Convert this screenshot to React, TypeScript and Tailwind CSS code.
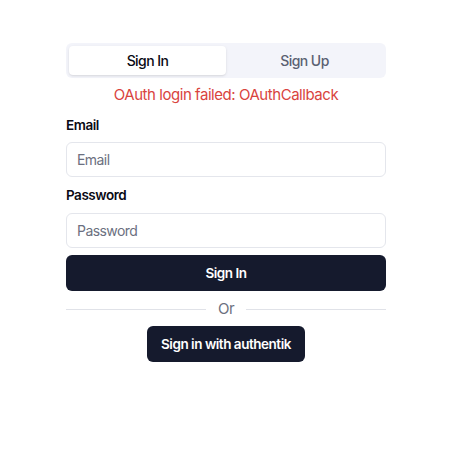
import { useState } from "react";

export default function App() {
  const [tab, setTab] = useState<"signin" | "signup">("signin");

  return (
    <div className="min-h-screen bg-white pt-[43px] pl-[66px] font-['Inter',sans-serif] text-[#0a0a14]">
      <div className="w-[320px] flex flex-col">
        <div className="flex rounded-md bg-[#f3f4fa] p-[3px] h-[35px]">
          <button
            onClick={() => setTab("signin")}
            className={`flex-1 rounded text-sm tracking-[-0.04em] font-medium ${tab === "signin" ? "bg-white text-[#0a0a14] shadow-sm" : "text-[#5a6072]"}`}
          >
            Sign In
          </button>
          <button
            onClick={() => setTab("signup")}
            className={`flex-1 rounded text-sm tracking-[-0.04em] font-medium ${tab === "signup" ? "bg-white text-[#0a0a14] shadow-sm" : "text-[#5a6072]"}`}
          >
            Sign Up
          </button>
        </div>

        <p className="mt-[7px] text-center text-[15px] tracking-[-0.03em] leading-5 text-[#d9443e]">
          OAuth login failed: OAuthCallback
        </p>

        <form className="flex flex-col" onSubmit={(e) => e.preventDefault()}>
          <label className="mt-[10px] text-[13.5px] tracking-[-0.035em] leading-5 font-semibold">Email</label>
          <input
            type="email"
            placeholder="Email"
            className="mt-[7px] h-[35px] rounded-md border border-[#e4e6ec] px-[10px] text-sm tracking-[-0.04em] placeholder:text-[#6b7080] outline-none"
          />
          <label className="mt-[8px] text-[13.5px] tracking-[-0.035em] leading-5 font-semibold">Password</label>
          <input
            type="password"
            placeholder="Password"
            className="mt-[8px] h-[35px] rounded-md border border-[#e4e6ec] px-[10px] text-sm tracking-[-0.04em] placeholder:text-[#6b7080] outline-none"
          />
          <button
            type="submit"
            className="mt-[7px] h-[36px] rounded-md bg-[#151a2d] text-white text-[13.5px] tracking-[-0.035em] font-semibold"
          >
            Sign In
          </button>
        </form>

        <div className="mt-[8px] flex items-center gap-3 h-5">
          <div className="flex-1 h-px bg-[#e0e2e8]" />
          <span className="text-[15px] tracking-[-0.03em] leading-5 text-[#6b7080]">Or</span>
          <div className="flex-1 h-px bg-[#e0e2e8]" />
        </div>

        <div className="mt-[7px] flex justify-center">
          <button className="h-[36px] px-[14px] rounded-md bg-[#151a2d] text-white text-[13.5px] tracking-[-0.035em] font-semibold">
            Sign in with authentik
          </button>
        </div>
      </div>
    </div>
  );
}
